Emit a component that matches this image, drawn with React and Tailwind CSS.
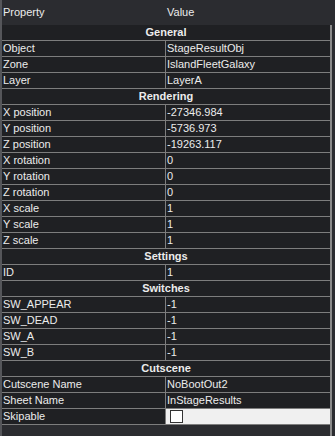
import React from "react";

const sections = [
  {
    title: "General",
    rows: [
      ["Object", "StageResultObj"],
      ["Zone", "IslandFleetGalaxy"],
      ["Layer", "LayerA"],
    ],
  },
  {
    title: "Rendering",
    rows: [
      ["X position", "-27346.984"],
      ["Y position", "-5736.973"],
      ["Z position", "-19263.117"],
      ["X rotation", "0"],
      ["Y rotation", "0"],
      ["Z rotation", "0"],
      ["X scale", "1"],
      ["Y scale", "1"],
      ["Z scale", "1"],
    ],
  },
  { title: "Settings", rows: [["ID", "1"]] },
  {
    title: "Switches",
    rows: [
      ["SW_APPEAR", "-1"],
      ["SW_DEAD", "-1"],
      ["SW_A", "-1"],
      ["SW_B", "-1"],
    ],
  },
  {
    title: "Cutscene",
    rows: [
      ["Cutscene Name", "NoBootOut2"],
      ["Sheet Name", "InStageResults"],
      ["Skipable", null],
    ],
  },
];

const App = () => {
  return (
    <div
      className="w-[335px] h-[436px] bg-[#2b2c30] text-[#ececec] text-[11px] leading-[15px] overflow-hidden flex flex-col"
      style={{ fontFamily: '"Liberation Sans", Tahoma, sans-serif' }}
    >
      {/* header */}
      <div className="h-[25px] flex items-center border-l-2 border-[#55565a]">
        <div className="w-[164px] pl-[1px]">Property</div>
        <div className="pl-[1px]">Value</div>
      </div>

      <div className="flex flex-1">
        <div className="w-[330px] flex flex-col border-l-2 border-[#55565a]">
          {sections.map((section) => (
            <React.Fragment key={section.title}>
              <div className="h-[16px] border-b border-[#7d7d7d] bg-[#1f2023] text-center font-bold">
                {section.title}
              </div>
              {section.rows.map(([name, value]) => (
                <div key={name} className="h-[16px] flex border-b border-[#7d7d7d] bg-[#1f2023]">
                  <div className="w-[164px] border-r border-[#7d7d7d] pl-[1px] truncate">{name}</div>
                  {value === null ? (
                    <div className="flex-1 bg-[#f0f0f0] flex items-center pl-[4px]">
                      <div className="w-[13px] h-[13px] bg-white border border-[#333]" />
                    </div>
                  ) : (
                    <div className="flex-1 pl-[1px] truncate">{value}</div>
                  )}
                </div>
              ))}
            </React.Fragment>
          ))}
        </div>
        <div className="w-[2px] bg-[#8a8a8a]" />
      </div>
    </div>
  );
};

export default App;
